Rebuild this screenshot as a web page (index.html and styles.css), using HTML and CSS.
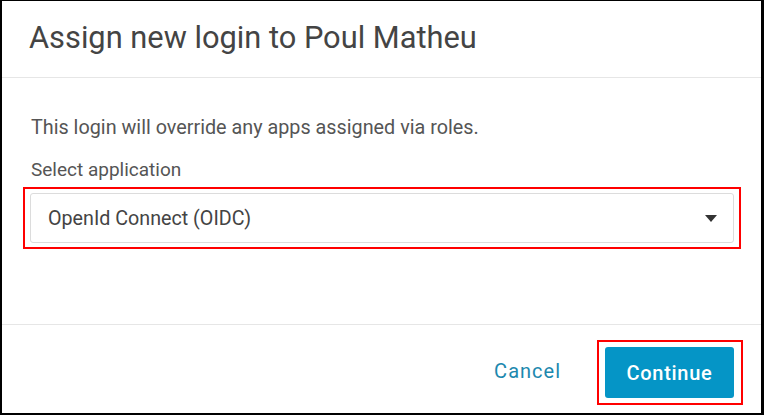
FILE: index.html
```html
<!DOCTYPE html>
<html lang="en">
<head>
<meta charset="utf-8">
<title>Assign new login</title>
<link rel="stylesheet" href="styles.css">
</head>
<body>
<div class="dialog">
  <div class="header">
    <h1 class="title">Assign new login to Poul Matheu</h1>
  </div>
  <div class="content">
    <p class="note">This login will override any apps assigned via roles.</p>
    <label class="label">Select application</label>
    <div class="highlight highlight-select">
      <div class="select">
        <span class="select-value">OpenId Connect (OIDC)</span>
        <svg class="caret" width="12" height="7" viewBox="0 0 12 7"><path d="M0 0 H12 L6 7 Z" fill="#333"/></svg>
      </div>
    </div>
  </div>
  <div class="footer">
    <span class="cancel">Cancel</span>
    <div class="highlight highlight-btn">
      <button class="primary">Continue</button>
    </div>
  </div>
</div>
</body>
</html>
```

FILE: styles.css
```css
html, body {
  margin: 0;
  padding: 0;
  background: #fff;
}
body {
  font-family: Roboto, "Liberation Sans", sans-serif;
}
.dialog {
  width: 764px;
  height: 415px;
  box-sizing: border-box;
  border-style: solid;
  border-color: #000;
  border-width: 1px 3px 2px 2px;
  display: flex;
  flex-direction: column;
  background: #fff;
}
.header {
  height: 76px;
  border-bottom: 1px solid #e6e6e6;
  display: flex;
  align-items: center;
  padding-left: 27px;
}
.title {
  margin: 0;
  font-size: 30.8px;
  font-weight: 400;
  color: #444;
  line-height: 36px;
  padding-bottom: 2px;
}
.content {
  flex: 1;
  padding: 0 28px 0 29px;
  display: flex;
  flex-direction: column;
}
.note {
  margin: 38px 0 0 0;
  font-size: 19.8px;
  line-height: 24px;
  color: #555;
}
.label {
  margin-top: 18px;
  font-size: 19px;
  line-height: 24px;
  color: #555;
}
.highlight {
  border: 2px solid #ff0000;
}
.highlight-select {
  margin: 5px -8px 0 -8px;
  padding: 4px 5px;
}
.select {
  height: 48px;
  border: 1px solid #dcdcdc;
  border-radius: 3px;
  display: flex;
  align-items: center;
  justify-content: space-between;
  padding: 0 16px 0 17px;
}
.select-value {
  font-size: 19.7px;
  color: #444;
}
.caret {
  display: block;
}
.footer {
  height: 89px;
  box-sizing: border-box;
  border-top: 1px solid #e6e6e6;
  display: flex;
  align-items: flex-start;
  justify-content: flex-end;
  padding: 15px 18px 0 0;
}
.cancel {
  font-size: 20px;
  line-height: 24px;
  letter-spacing: 1px;
  color: #1c88ae;
  margin-right: 36px;
  margin-top: 19px;
}
.highlight-btn {
  padding: 5px 7px 5px 6px;
}
.primary {
  display: block;
  width: 129px;
  height: 51px;
  border: none;
  border-radius: 3px;
  background: #0595c6;
  color: #fff;
  font-family: Roboto, "Liberation Sans", sans-serif;
  font-size: 20px;
  font-weight: 500;
  letter-spacing: 0.7px;
  padding: 0;
}
```
